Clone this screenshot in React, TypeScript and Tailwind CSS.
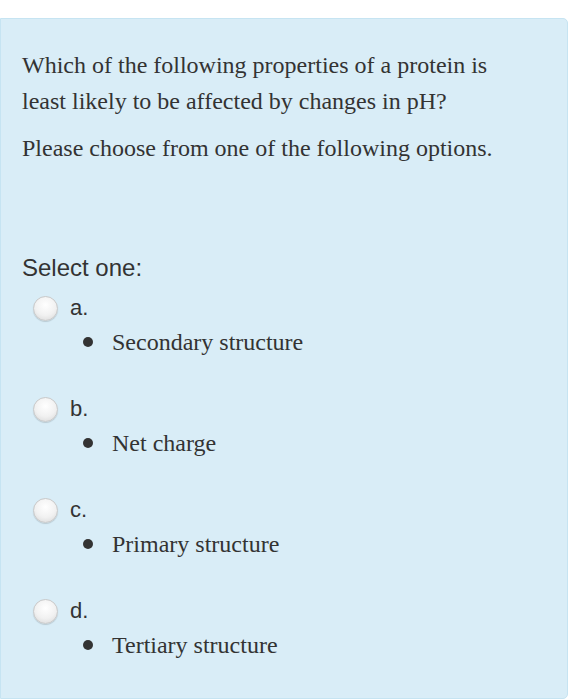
const options = [
  { letter: "a.", text: "Secondary structure" },
  { letter: "b.", text: "Net charge" },
  { letter: "c.", text: "Primary structure" },
  { letter: "d.", text: "Tertiary structure" },
];

function Radio() {
  return (
    <span className="block w-[25px] h-[25px] rounded-full border border-[#c9c9c9] bg-[radial-gradient(circle_at_50%_35%,#ffffff_0%,#f1f1f1_55%,#d6d6d6_100%)] shadow-[0_1px_1px_rgba(0,0,0,0.15)] shrink-0" />
  );
}

export default function App() {
  return (
    <div className="w-[579px] h-[700px] bg-white pt-[18px] pr-[11px] overflow-hidden">
      <div className="h-[681px] bg-[#d9edf7] border border-[#c6e4f2] rounded-r-[5px] pl-[21px] pt-[28px]">
        <div className="font-['Liberation_Serif',serif] text-[24px] leading-[36px] text-[#333333]">
          <p>
            Which of the following properties of a protein is
            <br />
            least likely to be affected by changes in pH?
          </p>
          <p className="mt-[11px]">Please choose from one of the following options.</p>
        </div>

        <div className="mt-[89px] font-['Liberation_Sans',sans-serif] text-[24px] leading-[26px] text-[#333333]">
          Select one:
        </div>

        <div className="mt-[14px] pl-[11px]">
          {options.map((o) => (
            <div key={o.letter} className="h-[101px]">
              <div className="flex items-center gap-[12px] h-[26px]">
                <Radio />
                <span className="font-['Liberation_Sans',sans-serif] text-[22px] text-[#333333] leading-[26px]">
                  {o.letter}
                </span>
              </div>
              <div className="flex items-center mt-[6px] pl-[50px] h-[30px]">
                <span className="w-[10px] h-[10px] rounded-full bg-[#333333] shrink-0" />
                <span className="ml-[19px] font-['Liberation_Serif',serif] text-[24px] text-[#333333]">
                  {o.text}
                </span>
              </div>
            </div>
          ))}
        </div>
      </div>
    </div>
  );
}
